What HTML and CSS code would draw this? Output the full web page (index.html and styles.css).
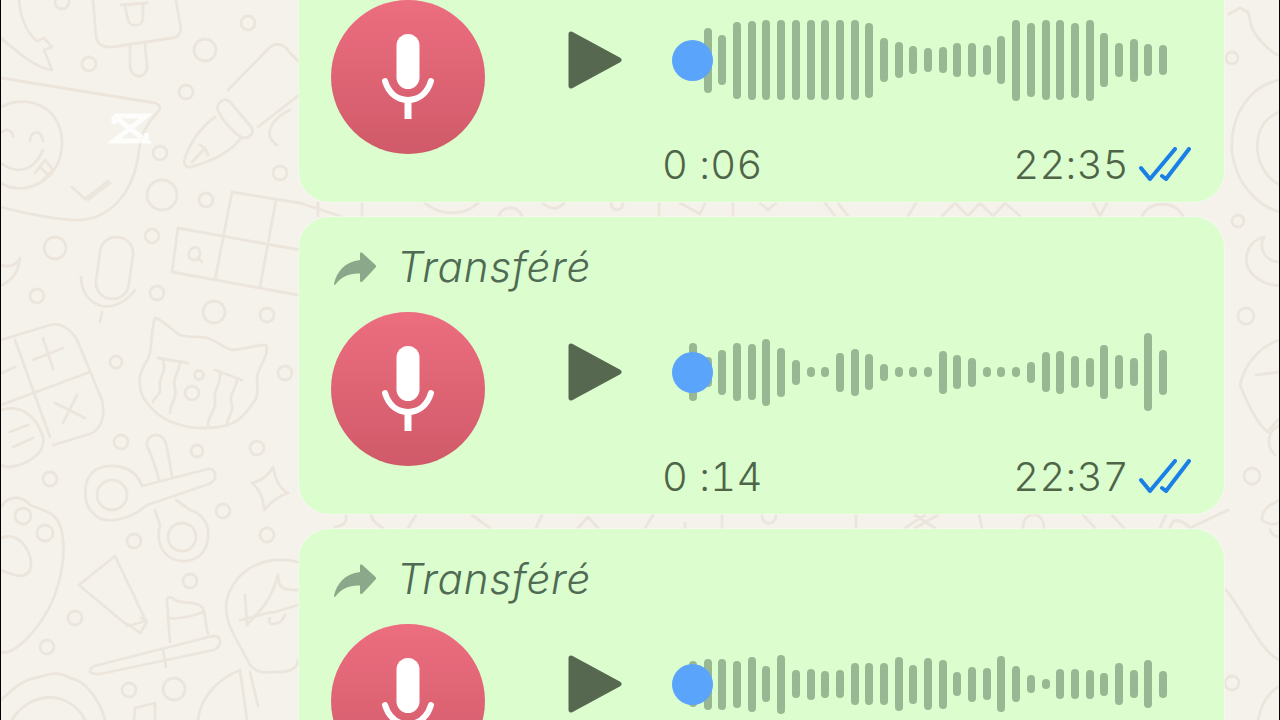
FILE: index.html
```html
<!DOCTYPE html>
<html>
  <head>
    <title>Messages vocaux</title>
    <link rel="stylesheet" href="styles.css">
  </head>
  <body>
    <main class="chat">
      <!-- Wallpaper doodles -->
      <svg class="doodles" width="1278" height="720" viewBox="1 0 1278 720" fill="none">
        <g>
          <circle cx="62" cy="2" r="7"/><circle cx="89" cy="64" r="7"/><circle cx="205" cy="50" r="11"/>
          <circle cx="248" cy="23" r="7"/><circle cx="186" cy="92" r="7"/><circle cx="160" cy="153" r="7"/>
          <circle cx="280" cy="173" r="7"/><circle cx="162" cy="195" r="15"/><circle cx="206" cy="200" r="7"/>
          <circle cx="152" cy="236" r="7"/><circle cx="55" cy="248" r="11"/><circle cx="37" cy="296" r="7"/>
          <circle cx="157" cy="293" r="7"/><circle cx="214" cy="312" r="11"/><circle cx="267" cy="315" r="7"/>
          <circle cx="116" cy="362" r="6"/>
          <circle cx="121" cy="442" r="7"/><circle cx="50" cy="479" r="7"/><circle cx="197" cy="451" r="6"/>
          <circle cx="257" cy="448" r="7"/><circle cx="223" cy="511" r="7"/><circle cx="267" cy="535" r="7"/>
          <circle cx="134" cy="541" r="7"/><circle cx="190" cy="581" r="7"/><circle cx="75" cy="618" r="7"/>
          <circle cx="47" cy="647" r="7"/><circle cx="174" cy="689" r="11"/><circle cx="129" cy="690" r="7"/>
          <circle cx="285" cy="373" r="7"/>
          <!-- top left fish -->
          <path d="M19 0C20 18 27 33 37 41L44 38L52 47L44 50L52 70C35 68 15 50 1 38"/>
          <!-- ice lolly -->
          <path d="M93 0L96 36C97 44 103 48 112 47L172 38C180 37 182 31 180 24L176 0"/>
          <path d="M130 47L130 65C130 80 148 80 147 65L145 44"/>
          <path d="M121 5L147 3M125 6L128 20C130 28 143 27 143 18L143 5"/>
          <!-- big speech bubble, smiley -->
          <path d="M1 78L155 103C161 105 161 109 157 113C147 123 141 135 139 150C134 195 108 222 72 220C45 218 20 212 1 207"/>
          <path d="M1 107C22 96 45 103 55 118C66 135 64 160 50 175C35 190 15 192 1 183"/>
          <path d="M1 163C15 174 33 173 43 150"/>
          <path d="M2 132C6 128 12 130 13 136M30 141C31 130 41 129 43 141"/>
          <path d="M35 173L45 160L53 170L43 180M40 167L48 175"/>
          <path d="M72 187L85 199L108 181M88 200L110 183"/>
          <!-- glue bottle and nib -->
          <path d="M228 90L270 47C277 42 285 44 289 52L299 62M299 95L258 127"/>
          <path d="M217 107C221 98 227 98 231 103L252 128C254 134 250 138 244 138C238 137 220 120 217 107Z"/>
          <path d="M215 117C200 128 188 145 184 162C185 168 190 168 194 166C215 160 232 150 241 138"/>
          <path d="M192 162L205 148L208 155M205 148L200 145"/>
          <path d="M290 110C272 118 262 135 277 145"/>
          <!-- crossword -->
          <path d="M232 192L300 203M178 228L300 250M172 272L298 295M178 228L172 272M232 192L215 280M276 200L260 287"/>
          <path d="M198 248C190 245 187 255 190 258C193 262 200 260 200 253C200 250 199 249 198 248ZM198 258L202 262"/>
          <!-- mic doodle -->
          <rect x="98" y="237" width="33" height="62" rx="16" transform="rotate(8 115 268)"/>
          <path d="M81 277C81 305 112 320 135 290M102 312L100 322"/>
          <path d="M1 265C10 268 18 264 20 258M2 285C12 280 18 272 19 262"/>
          <!-- calculator -->
          <path d="M1 340L50 325C62 322 72 330 78 342L102 400C106 418 100 430 90 434L53 445"/>
          <path d="M15 340L50 437M1 405L90 372"/>
          <path d="M43 338L53 369M33 360L63 348M2 373L15 367"/>
          <path d="M55 403L85 418M77 395L63 423"/>
          <path d="M1 410C18 405 35 412 43 437C46 452 30 464 10 467C6 467 3 466 1 465M10 432L28 425M13 447L33 438"/>
          <!-- crying cat -->
          <path d="M155 318C160 318 172 330 180 335C190 338 198 336 207 338C216 340 226 350 233 350C245 349 256 345 265 345C268 345 267 352 265 357C262 365 258 370 257 377C258 390 258 398 253 403C245 415 240 420 233 423C222 428 210 428 200 428C188 428 178 425 167 420C155 414 148 405 143 397C140 390 139 384 140 377C142 365 148 362 150 353C152 340 152 325 155 318Z"/>
          <path d="M158 358L188 363M215 370L242 380"/>
          <path d="M163 360C168 372 157 378 160 388C162 394 155 396 153 402M180 363C178 375 172 378 175 388C178 398 170 403 170 413"/>
          <path d="M220 372C222 385 213 388 215 400C217 410 208 415 208 425M237 380C235 392 228 395 232 405C234 412 227 418 227 425"/>
          <circle cx="192" cy="393" r="7"/><circle cx="199" cy="375" r="4.500"/>
          <!-- scissors -->
          <path d="M142 486L208 469C217 468 218 480 209 484L147 505C130 520 105 525 95 515C82 505 82 480 95 470C110 462 135 465 142 486Z"/>
          <circle cx="112" cy="495" r="15"/>
          <path d="M147 446C146 438 152 434 157 435C164 436 166 442 167 448L172 476M159 480C152 455 147 446 147 446"/>
          <path d="M155 510L160 525C155 545 165 560 182 561C198 562 210 550 208 530C206 520 200 513 190 510L176 500"/>
          <circle cx="182" cy="537" r="14"/>
          <path d="M252 483C263 480 269 475 273 467C275 478 280 489 288 493C279 496 270 503 264 510C264 500 260 490 252 483Z"/>
          <!-- paw -->
          <circle cx="23" cy="516" r="8"/><circle cx="45" cy="533" r="8"/>
          <path d="M1 507C8 495 22 495 30 505C42 510 55 512 60 525C68 550 62 590 42 620C28 640 12 655 1 652"/>
          <path d="M1 538C20 530 35 555 30 570C25 580 12 575 1 570"/>
          <!-- tube and brush -->
          <path d="M79 585L115 556L146 621L128 626Z"/>
          <path d="M128 624L140 633L147 622L141 618"/>
          <path d="M98 665L213 636C222 636 223 645 214 650L100 674C87 675 87 668 98 665Z"/>
          <path d="M163 650L166 667"/>
          <path d="M170 642L167 602C166 595 172 597 175 600C185 605 195 600 202 607C206 612 205 625 208 634"/>
          <path d="M168 618C180 620 195 615 204 612"/>
          <!-- head -->
          <path d="M298 562C270 555 240 565 228 595C220 620 238 640 250 665C258 675 268 672 280 672C290 672 298 668 298 660"/>
          <path d="M245 595L247 625C255 615 270 605 278 575C278 590 285 590 298 590"/>
          <path d="M240 620C255 618 265 612 275 612L298 605M270 618C265 625 280 628 285 615"/>
          <path d="M240 670C215 680 200 700 198 720M240 670L247 720M250 672L258 706"/>
          <!-- bottom left -->
          <path d="M1 700C12 690 22 680 35 678C48 675 55 670 70 678C85 680 100 700 105 720"/>
          <path d="M12 720C30 690 70 690 85 720"/>
          <path d="M134 720L135 708L155 703L155 720"/>
          <!-- right edge -->
          <circle cx="1232" cy="58" r="6"/><circle cx="1238" cy="221" r="6"/><circle cx="1246" cy="316" r="8"/>
          <circle cx="1252" cy="476" r="8"/><circle cx="1232" cy="683" r="7"/>
          <path d="M1229 14L1240 8L1248 12L1252 28C1258 40 1270 52 1280 56"/>
          <path d="M1280 80C1250 85 1230 115 1232 150C1235 185 1260 207 1280 212"/>
          <path d="M1280 112C1262 118 1255 135 1258 155C1262 172 1272 182 1280 185"/>
          <path d="M1264 237C1250 240 1243 255 1248 268C1255 280 1270 287 1280 285M1264 237C1258 248 1265 262 1280 262"/>
          <path d="M1280 340C1262 345 1245 362 1240 385C1248 405 1258 425 1268 432C1272 425 1278 420 1280 418"/>
          <path d="M1256 375L1280 372M1280 425C1268 430 1265 445 1275 455"/>
          <path d="M1280 500C1268 505 1262 510 1262 520C1268 525 1275 525 1280 522M1270 530C1272 535 1276 537 1280 537"/>
          <path d="M1226 590C1240 605 1262 655 1280 660M1258 720C1262 700 1272 690 1280 686"/>
          <!-- strips between the bubbles -->
          <path d="M300 203L340 216M318 203V216M362 203V216M425 203C440 216 465 216 478 203M499 216C502 205 518 205 522 216M543 203C550 210 558 210 564 203M611 203C611 212 623 212 623 203M659 203V216M680 203L700 214L705 203M733 203V216M760 203L768 210L776 203M825 203L835 216M838 203L848 216M916 203L908 216M942 216L955 203L968 216L980 203L993 216L1005 203L1020 216M1093 203L1100 216L1107 203M1142 216C1150 200 1175 200 1183 216"/>
          <path d="M346 515C347 522 345 525 335 527M371 515C373 522 378 525 383 528M416 515L408 528M472 515L490 528M542 515L536 528M578 528L588 517L598 528M653 515L645 528M685 523V528M722 515V528M762 515C762 526 776 526 776 515M856 515V528M905 528L925 515M915 528L938 515M915 515L935 528M979 515L982 528M1023 528C1023 510 1044 510 1044 528M1083 515L1095 528M1112 515L1124 528M1160 528L1166 515M1170 528C1172 518 1180 518 1190 528M1190 528L1228 510"/>
        </g>
        <!-- editor watermark -->
        <path class="watermark" d="M114 116H146L114 141H146L114 116M114 116V124M146 141V133"/>
      </svg>

      <div class="thread">
        <!-- first message, cut by the top edge right at the avatar -->
        <article class="bubble bubble-cut">
          <div class="voice">
            <div class="avatar">
              <svg width="154" height="154" viewBox="0 0 154 154" fill="none"><rect x="65.500" y="34" width="23" height="55" rx="11.500" fill="#fff"/><path d="M54 81C58 94 67 100 77 100C87 100 96 94 100 81" stroke="#fff" stroke-width="6" stroke-linecap="round"/><path d="M77 100V119" stroke="#fff" stroke-width="7"/></svg>
            </div>
            <div class="player">
              <div class="player-top">
                <svg class="play" width="54" height="58" viewBox="0 0 54 58"><path d="M3 3L51 29L3 55Z"/></svg>
                <div class="wave">
                  <span class="dot"></span>
                  <i style="height:30px"></i><i style="height:65px"></i><i style="height:50px"></i><i style="height:77px"></i><i style="height:79px"></i><i style="height:80px"></i><i style="height:80px"></i><i style="height:80px"></i><i style="height:80px"></i><i style="height:80px"></i><i style="height:80px"></i><i style="height:80px"></i><i style="height:75px"></i><i style="height:44px"></i><i style="height:36px"></i><i style="height:28px"></i><i style="height:24px"></i><i style="height:26px"></i><i style="height:34px"></i><i style="height:34px"></i><i style="height:30px"></i><i style="height:48px"></i><i style="height:81px"></i><i style="height:74px"></i><i style="height:80px"></i><i style="height:80px"></i><i style="height:75px"></i><i style="height:81px"></i><i style="height:54px"></i><i style="height:34px"></i><i style="height:43px"></i><i style="height:32px"></i><i style="height:30px"></i>
                </div>
              </div>
              <div class="player-meta">
                <span class="duration">0 :06</span>
                <span class="time">22:35</span>
                <svg class="ticks" width="52" height="34" viewBox="0 0 52 34" fill="none"><path d="M2 21L11 32L36 2M23 29L27 32L50 2"/></svg>
              </div>
            </div>
          </div>
        </article>

        <article class="bubble">
          <div class="forwarded">
            <svg class="forward-icon" width="42" height="33" viewBox="0 0 42 33"><path d="M26 1.500C26 .5 27.500 .2 28.500 1L41.500 13C42.200 13.800 42.200 14.800 41.500 15.500L28.500 29.500C27.500 30.500 26 30 26 28.800V21.500C16 21 7 24.500 1.500 32.500C.8 33.300 -.2 32.800 0 31.800C2.500 20 11 9.500 26 8Z"/></svg>
            <span class="forwarded-label">Transféré</span>
          </div>
          <div class="voice">
            <div class="avatar">
              <svg width="154" height="154" viewBox="0 0 154 154" fill="none"><rect x="65.500" y="34" width="23" height="55" rx="11.500" fill="#fff"/><path d="M54 81C58 94 67 100 77 100C87 100 96 94 100 81" stroke="#fff" stroke-width="6" stroke-linecap="round"/><path d="M77 100V119" stroke="#fff" stroke-width="7"/></svg>
            </div>
            <div class="player">
              <div class="player-top">
                <svg class="play" width="54" height="58" viewBox="0 0 54 58"><path d="M3 3L51 29L3 55Z"/></svg>
                <div class="wave">
                  <span class="dot"></span>
                  <i style="height:58px"></i><i style="height:30px"></i><i style="height:45px"></i><i style="height:58px"></i><i style="height:56px"></i><i style="height:67px"></i><i style="height:49px"></i><i style="height:25px"></i><i style="height:10px"></i><i style="height:10px"></i><i style="height:39px"></i><i style="height:47px"></i><i style="height:36px"></i><i style="height:17px"></i><i style="height:10px"></i><i style="height:10px"></i><i style="height:10px"></i><i style="height:43px"></i><i style="height:34px"></i><i style="height:29px"></i><i style="height:10px"></i><i style="height:10px"></i><i style="height:10px"></i><i style="height:21px"></i><i style="height:40px"></i><i style="height:43px"></i><i style="height:32px"></i><i style="height:29px"></i><i style="height:54px"></i><i style="height:34px"></i><i style="height:28px"></i><i style="height:78px"></i><i style="height:45px"></i>
                </div>
              </div>
              <div class="player-meta">
                <span class="duration">0 :14</span>
                <span class="time">22:37</span>
                <svg class="ticks" width="52" height="34" viewBox="0 0 52 34" fill="none"><path d="M2 21L11 32L36 2M23 29L27 32L50 2"/></svg>
              </div>
            </div>
          </div>
        </article>

        <!-- last message, runs off the bottom edge before its times -->
        <article class="bubble">
          <div class="forwarded">
            <svg class="forward-icon" width="42" height="33" viewBox="0 0 42 33"><path d="M26 1.500C26 .5 27.500 .2 28.500 1L41.500 13C42.200 13.800 42.200 14.800 41.500 15.500L28.500 29.500C27.500 30.500 26 30 26 28.800V21.500C16 21 7 24.500 1.500 32.500C.8 33.300 -.2 32.800 0 31.800C2.500 20 11 9.500 26 8Z"/></svg>
            <span class="forwarded-label">Transféré</span>
          </div>
          <div class="voice">
            <div class="avatar">
              <svg width="154" height="154" viewBox="0 0 154 154" fill="none"><rect x="65.500" y="34" width="23" height="55" rx="11.500" fill="#fff"/><path d="M54 81C58 94 67 100 77 100C87 100 96 94 100 81" stroke="#fff" stroke-width="6" stroke-linecap="round"/><path d="M77 100V119" stroke="#fff" stroke-width="7"/></svg>
            </div>
            <div class="player">
              <div class="player-top">
                <svg class="play" width="54" height="58" viewBox="0 0 54 58"><path d="M3 3L51 29L3 55Z"/></svg>
                <div class="wave">
                  <span class="dot"></span>
                  <i style="height:46px"></i><i style="height:51px"></i><i style="height:51px"></i><i style="height:47px"></i><i style="height:55px"></i><i style="height:36px"></i><i style="height:59px"></i><i style="height:28px"></i><i style="height:31px"></i><i style="height:27px"></i><i style="height:28px"></i><i style="height:42px"></i><i style="height:42px"></i><i style="height:42px"></i><i style="height:54px"></i><i style="height:39px"></i><i style="height:52px"></i><i style="height:49px"></i><i style="height:24px"></i><i style="height:35px"></i><i style="height:32px"></i><i style="height:56px"></i><i style="height:36px"></i><i style="height:18px"></i><i style="height:10px"></i><i style="height:30px"></i><i style="height:30px"></i><i style="height:29px"></i><i style="height:23px"></i><i style="height:42px"></i><i style="height:28px"></i><i style="height:48px"></i><i style="height:27px"></i>
                </div>
              </div>
            </div>
          </div>
        </article>
      </div>
    </main>
  </body>
</html>
```

FILE: styles.css
```css
/* Page frame, the video has a thin black edge on both sides */
body {
  margin: 0;
  background-color: #000;
  font-family: "Inter", "Liberation Sans", sans-serif;
}

.chat {
  position: relative;
  height: 720px;
  margin: 0 1px;
  padding-left: 298px;
  overflow: hidden;
  background-color: #f5f2ec;
}

/* Wallpaper */
.doodles {
  position: absolute;
  top: 0;
  left: 0;
}

.doodles g {
  stroke: #ebe5dc;
  stroke-width: 2.800;
  stroke-linecap: round;
  stroke-linejoin: round;
}

.watermark {
  stroke: #fff;
  stroke-width: 5;
  stroke-opacity: 0.8;
  filter: blur(0.6px);
}

/* Message list */
.thread {
  position: relative;
  display: flex;
  flex-direction: column;
  gap: 15px;
  width: 925px;
}

.bubble {
  flex-shrink: 0;
  height: 297px;
  box-sizing: border-box;
  padding: 30px 33px 0 32px;
  background-color: #dcfdcd;
  border-radius: 30px;
  box-shadow: 0 0 0 1px rgba(255, 255, 255, 0.35);
}

.bubble-cut {
  height: 202px;
  padding-top: 0;
  border-radius: 0 0 30px 30px;
}

/* Forwarded header */
.forwarded {
  display: flex;
  align-items: center;
  height: 40px;
  margin-bottom: 25px;
}

.forward-icon {
  margin: 3px 0 0 3px;
  fill: #8ba98a;
}

.forwarded-label {
  margin-left: 21px;
  padding-bottom: 2px;
  font-size: 42px;
  font-style: italic;
  font-weight: 300;
  letter-spacing: 0.9px;
  color: #4f6b55;
}

/* Voice note */
.voice {
  display: flex;
}

.avatar {
  flex-shrink: 0;
  width: 154px;
  height: 154px;
  border-radius: 50%;
  background: linear-gradient(#ec6e7f, #d05a69);
}

.player {
  flex: 1;
}

.player-top {
  display: flex;
  align-items: center;
  height: 120px;
  padding-left: 83px;
}

.play {
  flex-shrink: 0;
  fill: #566850;
  stroke: #566850;
  stroke-width: 5;
  stroke-linejoin: round;
}

.wave {
  position: relative;
  display: flex;
  align-items: center;
  gap: 6.69px;
  margin-left: 67px;
}

.wave i {
  flex-shrink: 0;
  width: 8px;
  border-radius: 4px;
  background-color: #98b893;
}

.dot {
  position: absolute;
  top: 50%;
  left: -17px;
  width: 41px;
  height: 41px;
  margin-top: -20.5px;
  border-radius: 50%;
  background-color: #5aa5fb;
}

.player-meta {
  display: flex;
  align-items: center;
  height: 40px;
  margin-top: 24px;
  padding-left: 177px;
  font-size: 40px;
  font-weight: 300;
  letter-spacing: 0.3px;
  font-variant-numeric: tabular-nums;
  color: #4f6549;
}

.duration {
  flex: 1;
}

.ticks {
  margin-left: 10px;
  stroke: #1a7fe6;
  stroke-width: 4;
  stroke-linecap: round;
  stroke-linejoin: round;
}
```
